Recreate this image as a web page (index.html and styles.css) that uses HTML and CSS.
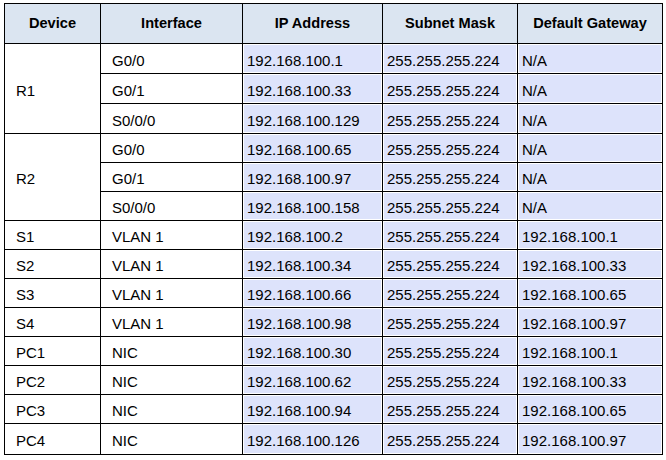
FILE: index.html
```html
<!DOCTYPE html>
<html>
<head>
<meta charset="utf-8">
<link rel="stylesheet" href="styles.css">
</head>
<body>
<table class="addr">
  <colgroup>
    <col class="c-dev"><col class="c-if"><col class="c-ip"><col class="c-mask"><col class="c-gw">
  </colgroup>
  <thead>
    <tr class="head">
      <th>Device</th><th>Interface</th><th>IP Address</th><th>Subnet Mask</th><th>Default Gateway</th>
    </tr>
  </thead>
  <tbody>
    <tr class="h30"><td class="dev" rowspan="3">R1</td><td class="if">G0/0</td><td class="sh">192.168.100.1</td><td class="sh">255.255.255.224</td><td class="sh">N/A</td></tr>
    <tr class="h30"><td class="if">G0/1</td><td class="sh">192.168.100.33</td><td class="sh">255.255.255.224</td><td class="sh">N/A</td></tr>
    <tr class="h30"><td class="if">S0/0/0</td><td class="sh">192.168.100.129</td><td class="sh">255.255.255.224</td><td class="sh">N/A</td></tr>
    <tr class="h29"><td class="dev" rowspan="3">R2</td><td class="if">G0/0</td><td class="sh">192.168.100.65</td><td class="sh">255.255.255.224</td><td class="sh">N/A</td></tr>
    <tr class="h29"><td class="if">G0/1</td><td class="sh">192.168.100.97</td><td class="sh">255.255.255.224</td><td class="sh">N/A</td></tr>
    <tr class="h29"><td class="if">S0/0/0</td><td class="sh">192.168.100.158</td><td class="sh">255.255.255.224</td><td class="sh">N/A</td></tr>
    <tr class="h29"><td class="dev">S1</td><td class="if">VLAN 1</td><td class="sh">192.168.100.2</td><td class="sh">255.255.255.224</td><td class="sh">192.168.100.1</td></tr>
    <tr class="h29"><td class="dev">S2</td><td class="if">VLAN 1</td><td class="sh">192.168.100.34</td><td class="sh">255.255.255.224</td><td class="sh">192.168.100.33</td></tr>
    <tr class="h29"><td class="dev">S3</td><td class="if">VLAN 1</td><td class="sh">192.168.100.66</td><td class="sh">255.255.255.224</td><td class="sh">192.168.100.65</td></tr>
    <tr class="h29"><td class="dev">S4</td><td class="if">VLAN 1</td><td class="sh">192.168.100.98</td><td class="sh">255.255.255.224</td><td class="sh">192.168.100.97</td></tr>
    <tr class="h29"><td class="dev">PC1</td><td class="if">NIC</td><td class="sh">192.168.100.30</td><td class="sh">255.255.255.224</td><td class="sh">192.168.100.1</td></tr>
    <tr class="h29"><td class="dev">PC2</td><td class="if">NIC</td><td class="sh">192.168.100.62</td><td class="sh">255.255.255.224</td><td class="sh">192.168.100.33</td></tr>
    <tr class="h29"><td class="dev">PC3</td><td class="if">NIC</td><td class="sh">192.168.100.94</td><td class="sh">255.255.255.224</td><td class="sh">192.168.100.65</td></tr>
    <tr class="h31"><td class="dev">PC4</td><td class="if">NIC</td><td class="sh">192.168.100.126</td><td class="sh">255.255.255.224</td><td class="sh">192.168.100.97</td></tr>
  </tbody>
</table>
</body>
</html>
```
FILE: styles.css
```css
html, body {
  margin: 0;
  padding: 0;
  background: #ffffff;
}
body {
  font-family: "Liberation Sans", Arial, sans-serif;
  font-size: 15px;
  color: #000000;
}
.addr {
  border-collapse: collapse;
  table-layout: fixed;
  margin: 3px 0 0 4px;
  width: 658px;
}
.c-dev { width: 96px; }
.c-if { width: 142px; }
.c-ip { width: 140px; }
.c-mask { width: 135px; }
.c-gw { width: 145px; }
.addr th, .addr td {
  border: 1px solid #000000;
  white-space: nowrap;
  overflow: hidden;
}
.head {
  height: 40px;
}
.addr th {
  background: #dbe5f1;
  font-weight: bold;
  font-size: 14.6px;
  text-align: center;
  vertical-align: middle;
  padding: 0 0 2px 0;
}
.addr td {
  text-align: left;
  vertical-align: middle;
  padding: 3px 0 0 0;
}
.h29 { height: 29px; }
.h30 { height: 30px; }
.h31 { height: 31px; }
.dev, .if {
  padding-left: 11px !important;
}
.sh {
  background: #dde3fb;
  box-shadow: inset 0 0 0 1px #ffffff;
  padding-left: 4px !important;
}
```
